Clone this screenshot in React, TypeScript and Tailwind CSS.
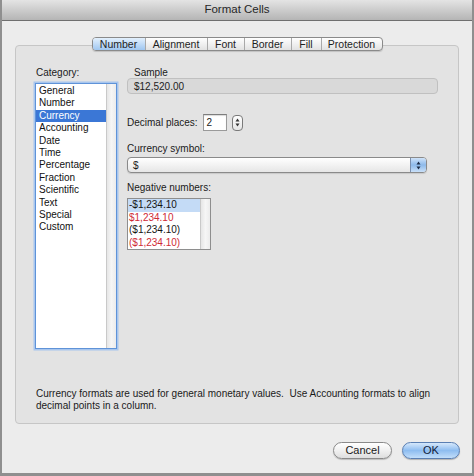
import React from "react";

const font = { fontFamily: '"Liberation Sans", Arial, sans-serif' };

const categories = [
  "General",
  "Number",
  "Currency",
  "Accounting",
  "Date",
  "Time",
  "Percentage",
  "Fraction",
  "Scientific",
  "Text",
  "Special",
  "Custom",
];

const tabs = [
  { label: "Number", w: "w-[52px]", active: true },
  { label: "Alignment", w: "w-[62px]" },
  { label: "Font", w: "w-[37px]" },
  { label: "Border", w: "w-[47px]" },
  { label: "Fill", w: "w-[30px]" },
  { label: "Protection", w: "w-[61px]" },
];

const negatives = [
  { text: "-$1,234.10", red: false, selected: true },
  { text: "$1,234.10", red: true },
  { text: "($1,234.10)", red: false },
  { text: "($1,234.10)", red: true },
];

function UpDown({ color = "#333" }: { color?: string }) {
  return (
    <svg width="5" height="9" viewBox="0 0 5 9">
      <path d="M2.5 0.5 L4.5 3.5 L0.5 3.5 Z" fill={color} />
      <path d="M2.5 8.5 L4.5 5.5 L0.5 5.5 Z" fill={color} />
    </svg>
  );
}

function ScrollTrack() {
  return (
    <div className="w-[10px] shrink-0 border-l border-[#c9c9c9] bg-gradient-to-r from-[#e6e6e6] via-[#f6f6f6] to-[#ececec]" />
  );
}

export default function App() {
  return (
    <div className="w-[474px] h-[476px] bg-[#8f8f8f] pl-[2px]" style={font}>
      <div className="w-[470px] h-[473px] bg-[#ececec] flex flex-col">
        {/* Title bar */}
        <div className="h-[21px] shrink-0 flex items-center justify-center border-b border-[#6f6f6f] bg-gradient-to-b from-[#e4e4e4] to-[#b5b5b5] text-[11.5px] text-[#262626]">
          Format Cells
        </div>

        <div className="flex-1 flex flex-col px-[13px]">
          {/* Tabs */}
          <div className="relative z-10 mt-[16px] flex justify-center">
            <div className="flex h-[14px] rounded-[4px] border border-[#8a8a8a] bg-gradient-to-b from-white to-[#e2e2e2] shadow-[0_1px_1px_rgba(0,0,0,0.15)] overflow-hidden">
              {tabs.map((t, i) => (
                <div
                  key={t.label}
                  className={`${t.w} flex items-center justify-center text-[10.5px] leading-none text-[#1e1e1e] ${
                    i > 0 ? "border-l border-[#a9a9a9]" : ""
                  } ${t.active ? "bg-gradient-to-b from-[#e3f0fd] to-[#9fc6f0]" : ""}`}
                >
                  {t.label}
                </div>
              ))}
            </div>
          </div>

          {/* Panel */}
          <div className="-mt-[6px] h-[379px] rounded-[4px] border border-[#c6c6c6] bg-[#e3e3e3] flex flex-col px-[19px] pb-[11px]">
            <div className="flex pt-[21px]">
              {/* Category column */}
              <div className="flex flex-col">
                <div className="pl-px text-[10px] leading-[12px] text-[#1a1a1a]">Category:</div>
                <div className="mt-[4px] w-[82px] h-[266px] flex bg-white border border-[#5f93d8] shadow-[0_0_0_1.5px_#a8c6ee]">
                  <div className="flex-1 flex flex-col pt-[1px]">
                    {categories.map((c) => (
                      <div
                        key={c}
                        className={`pl-[3px] text-[10px] leading-[12.4px] ${
                          c === "Currency" ? "bg-[#3b77d6] text-white" : "text-[#111]"
                        }`}
                      >
                        {c}
                      </div>
                    ))}
                  </div>
                  <ScrollTrack />
                </div>
              </div>

              {/* Right column */}
              <div className="ml-[10px] flex flex-col text-[10px] text-[#1a1a1a]">
                <div className="pl-[7px] leading-[11px]">Sample</div>
                <div className="w-[311px] h-[16px] rounded-[4px] border border-[#c0c0c0] bg-[#d9d9d9] pl-[6px] flex items-center text-[#222]">
                  $12,520.00
                </div>

                <div className="mt-[20px] flex items-center h-[17px]">
                  <span>Decimal places:</span>
                  <div className="ml-[5px] w-[24px] h-[17px] bg-white border border-[#9a9a9a] border-t-[#7d7d7d] shadow-[inset_0_1px_1px_rgba(0,0,0,0.15)] flex items-center pl-[3px]">
                    2
                  </div>
                  <div className="ml-[5px] w-[11px] h-[16px] rounded-[4px] border border-[#7a7a7a] bg-gradient-to-b from-white to-[#e5e5e5] flex items-center justify-center">
                    <UpDown />
                  </div>
                </div>

                <div className="mt-[12px] leading-[11px]">Currency symbol:</div>
                <div className="mt-[3px] w-[300px] h-[16px] rounded-[4px] border border-[#8a8a8a] bg-gradient-to-b from-white to-[#e6e6e6] flex items-center shadow-[0_1px_1px_rgba(0,0,0,0.12)] overflow-hidden">
                  <span className="flex-1 pl-[5px]">$</span>
                  <div className="w-[16px] h-full border-l border-[#7a8fae] bg-gradient-to-b from-[#cfe3f9] via-[#8db9ea] to-[#c9e0f8] flex items-center justify-center">
                    <UpDown color="#1b2b45" />
                  </div>
                </div>

                <div className="mt-[9px] leading-[11px]">Negative numbers:</div>
                <div className="mt-[5px] w-[84px] h-[52px] flex bg-white border border-[#8e8e8e]">
                  <div className="flex-1 flex flex-col">
                    {negatives.map((n, i) => (
                      <div
                        key={i}
                        className={`pl-[1px] leading-[12.5px] ${n.selected ? "bg-[#c4dbf6]" : ""} ${
                          n.red ? "text-[#cf2b36]" : "text-[#141414]"
                        }`}
                      >
                        {n.text}
                      </div>
                    ))}
                  </div>
                  <ScrollTrack />
                </div>
              </div>
            </div>

            <div className="mt-auto pl-px text-[10px] leading-[12px] text-[#1a1a1a] whitespace-pre">
              {"Currency formats are used for general monetary values.  Use Accounting formats to align"}
              <br />
              {"decimal points in a column."}
            </div>
          </div>

          {/* Buttons */}
          <div className="mt-[18px] flex justify-end gap-[10px] -mr-px">
            <button className="w-[59px] h-[17px] rounded-full border border-[#8a8a8a] bg-gradient-to-b from-white via-[#f0f0f0] to-[#dedede] text-[11px] leading-none text-[#1a1a1a] shadow-[0_1px_1px_rgba(0,0,0,0.2)]">
              Cancel
            </button>
            <button className="w-[58px] h-[17px] rounded-full border border-[#5a7fb3] bg-gradient-to-b from-[#d6e8fb] via-[#8ebdf0] to-[#c2defa] text-[11px] leading-none text-[#10203a] shadow-[0_1px_1px_rgba(0,0,0,0.25)]">
              OK
            </button>
          </div>
        </div>
      </div>
    </div>
  );
}
